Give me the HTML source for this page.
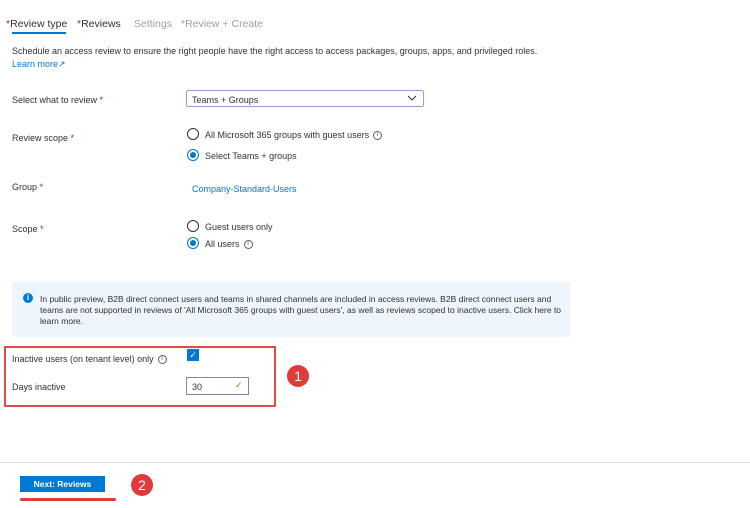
<!DOCTYPE html><html><head><style>
body{margin:0;width:750px;height:508px;background:#fff;font-family:"Liberation Sans",sans-serif;font-size:9px;color:#323130;position:relative;overflow:hidden}
.a{position:absolute;white-space:nowrap}
.r{color:#a4262c}
.rad{position:absolute;width:10px;height:10px;border:1px solid #323130;border-radius:50%}
.rad.on::after{content:"";position:absolute;left:2px;top:2px;width:6px;height:6px;border-radius:50%;background:#0078d4}
.rad.on{border-color:#0078d4}
.info{display:inline-block;width:7px;height:7px;border:1px solid #605e5c;border-radius:50%;font-size:6px;text-align:center;line-height:7px;vertical-align:middle;margin-left:4px}
</style></head><body>
<div class="a" style="left:6px;top:18px;font-size:10.5px"><span class="r">*</span>Review type</div>
<div style="position:absolute;left:12px;top:32px;width:54px;height:2px;background:#0078d4"></div>
<div class="a" style="left:77px;top:18px;font-size:10.5px"><span class="r">*</span>Reviews</div>
<div class="a" style="left:134px;top:18px;font-size:10.5px;color:#a19f9d">Settings</div>
<div class="a" style="left:181px;top:18px;font-size:10.5px;color:#a19f9d">*Review + Create</div>
<div class="a" style="left:12px;top:46px">Schedule an access review to ensure the right people have the right access to access packages, groups, apps, and privileged roles.</div>
<div class="a" style="left:12px;top:59px;color:#0078d4">Learn more↗</div>
<div class="a" style="left:12px;top:95px">Select what to review <span class="r">*</span></div>
<div style="position:absolute;left:186px;top:90px;width:236px;height:15px;border:1px solid #b88fd0;border-radius:2px"></div>
<div class="a" style="left:192px;top:95px">Teams + Groups</div>
<svg class="a" style="left:407px;top:95px" width="10" height="6"><path d="M1 1l4 4 4-4" stroke="#323130" fill="none"/></svg>
<div class="a" style="left:12px;top:133px">Review scope <span class="r">*</span></div>
<div class="rad" style="left:187px;top:128px"></div><div class="a" style="left:205px;top:130px">All Microsoft 365 groups with guest users<span class="info">i</span></div>
<div class="rad on" style="left:187px;top:149px"></div><div class="a" style="left:205px;top:151px">Select Teams + groups</div>
<div class="a" style="left:12px;top:182px">Group <span class="r">*</span></div>
<div class="a" style="left:192px;top:184px;color:#0078d4">Company-Standard-Users</div>
<div class="a" style="left:12px;top:224px">Scope <span class="r">*</span></div>
<div class="rad" style="left:187px;top:220px"></div><div class="a" style="left:205px;top:222px">Guest users only</div>
<div class="rad on" style="left:187px;top:237px"></div><div class="a" style="left:205px;top:239px">All users<span class="info">i</span></div>
<div style="position:absolute;left:12px;top:282px;width:558px;height:55px;background:#eff5fc"></div>
<div style="position:absolute;left:23px;top:293px;width:10px;height:10px;border-radius:50%;background:#0078d4;color:#fff;font-size:8px;font-weight:bold;text-align:center;line-height:10px">i</div>
<div class="a" style="left:40px;top:294px;font-size:8.5px;line-height:11px;white-space:normal;width:525px">In public preview, B2B direct connect users and teams in shared channels are included in access reviews. B2B direct connect users and teams are not supported in reviews of 'All Microsoft 365 groups with guest users', as well as reviews scoped to inactive users. Click here to learn more.</div>
<div style="position:absolute;left:4px;top:346px;width:268px;height:57px;border:2px solid #e04b4b"></div>
<div class="a" style="left:12px;top:354px">Inactive users (on tenant level) only<span class="info">i</span></div>
<div style="position:absolute;left:187px;top:349px;width:12px;height:12px;background:#0078d4;color:#fff;font-size:9px;text-align:center;line-height:12px">✓</div>
<div class="a" style="left:12px;top:382px">Days inactive</div>
<div style="position:absolute;left:186px;top:377px;width:61px;height:16px;border:1px solid #8a8886"></div>
<div class="a" style="left:192px;top:382px">30</div>
<div class="a" style="left:235px;top:380px;color:#57a300">✓</div>
<div style="position:absolute;left:287px;top:365px;width:22px;height:22px;border-radius:50%;background:#e03a3a;color:#fff;font-size:14px;text-align:center;line-height:22px">1</div>
<div style="position:absolute;left:0;top:462px;width:750px;height:1px;background:#e1dfdd"></div>
<div style="position:absolute;left:20px;top:476px;width:85px;height:16px;background:#0078d4;color:#fff;font-weight:bold;font-size:8.5px;text-align:center;line-height:16px">Next: Reviews</div>
<div style="position:absolute;left:20px;top:498px;width:96px;height:3px;background:#e03a3a;border-radius:2px"></div>
<div style="position:absolute;left:131px;top:474px;width:22px;height:22px;border-radius:50%;background:#e03a3a;color:#fff;font-size:14px;text-align:center;line-height:22px">2</div>
</body></html>
